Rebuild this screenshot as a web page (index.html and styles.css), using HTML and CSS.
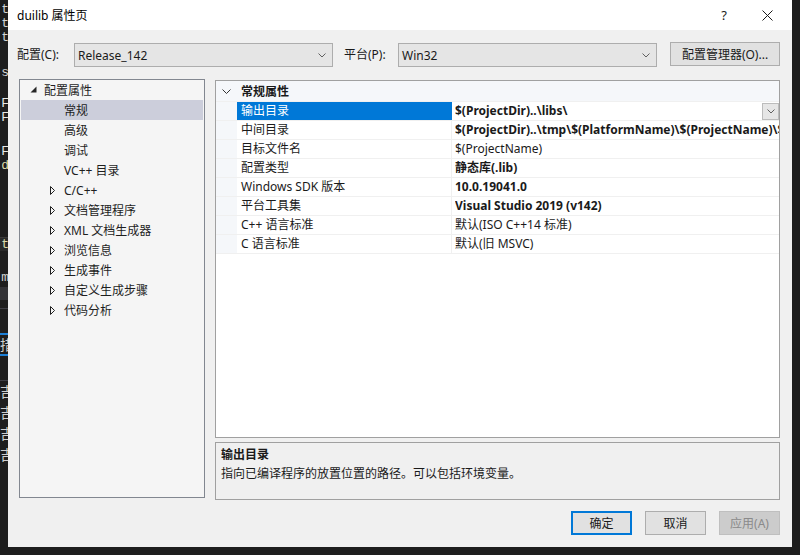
FILE: index.html
```html
<!DOCTYPE html>
<html lang="zh-CN">
<head>
<meta charset="utf-8">
<title>duilib 属性页</title>
<link rel="stylesheet" href="styles.css">
</head>
<body>
<div class="screen">
  <!-- code editor behind the dialog -->
  <div class="strip">
    <div class="ln l-top">t</div>
    <div class="ln">t</div>
    <div class="ln">t</div>
    <div class="sp sp21"></div>
    <div class="ln">s</div>
    <div class="sp sp17"></div>
    <div class="ln ln-f">F</div>
    <div class="ln ln-f">F</div>
    <div class="sp sp20"></div>
    <div class="ln ln-f">F</div>
    <div class="ln ln-y">d</div>
    <div class="sp sp64"></div>
    <div class="ln band ln-y">t</div>
    <div class="sp sp20"></div>
    <div class="ln">m</div>
    <div class="sp sp2"></div>
    <div class="band band-dark"></div>
    <div class="sp sp8"></div>
    <div class="rule rule-gray"></div>
    <div class="sp sp24"></div>
    <div class="rule rule-blue"></div>
    <div class="ln ln-cjk">措</div>
    <div class="rule rule-blue"></div>
    <div class="sp sp24"></div>
    <div class="rule rule-gray"></div>
    <div class="ln ln-cjk tall">吉</div>
    <div class="ln ln-cjk tall">吉</div>
    <div class="ln ln-cjk tall">吉</div>
    <div class="ln ln-cjk tall">吉</div>
  </div>

  <div class="dialog">
    <header class="titlebar">
      <span class="title">duilib 属性页</span>
      <span class="help">?</span>
      <span class="close">
        <svg width="11" height="11" viewBox="0 0 11 11"><path d="M0.5 0.5 L10.5 10.5 M10.5 0.5 L0.5 10.5" stroke="#1a1a1a" stroke-width="1" fill="none"/></svg>
      </span>
    </header>

    <div class="body">
      <div class="toolbar">
        <span class="lbl lbl-cfg">配置(C):</span>
        <div class="select">
          <span class="select-text">Release_142</span>
          <svg class="chev" width="8" height="5" viewBox="0 0 8 5"><path d="M0.5 0.5 L4 4 L7.5 0.5" stroke="#606060" fill="none"/></svg>
        </div>
        <span class="lbl lbl-plat">平台(P):</span>
        <div class="select">
          <span class="select-text">Win32</span>
          <svg class="chev" width="8" height="5" viewBox="0 0 8 5"><path d="M0.5 0.5 L4 4 L7.5 0.5" stroke="#606060" fill="none"/></svg>
        </div>
        <button class="btn btn-mgr">配置管理器(O)...</button>
      </div>

      <div class="main">
        <div class="tree">
          <div class="node lvl1">
            <span class="exp"><svg width="7" height="7" viewBox="0 0 7 7"><path d="M6.5 0.5 L6.5 6.5 L0.5 6.5 Z" fill="#262626"/></svg></span>
            <span>配置属性</span>
          </div>
          <div class="node lvl2 sel"><span class="exp"></span><span>常规</span></div>
          <div class="node lvl2"><span class="exp"></span><span>高级</span></div>
          <div class="node lvl2"><span class="exp"></span><span>调试</span></div>
          <div class="node lvl2"><span class="exp"></span><span>VC++ 目录</span></div>
          <div class="node lvl2"><span class="exp"><svg class="tri" width="6" height="9" viewBox="0 0 6 9"><path d="M0.5 0.5 L4.5 4.5 L0.5 8.5 Z" stroke="#1e1e1e" fill="none"/></svg></span><span>C/C++</span></div>
          <div class="node lvl2"><span class="exp"><svg class="tri" width="6" height="9" viewBox="0 0 6 9"><path d="M0.5 0.5 L4.5 4.5 L0.5 8.5 Z" stroke="#1e1e1e" fill="none"/></svg></span><span>文档管理程序</span></div>
          <div class="node lvl2"><span class="exp"><svg class="tri" width="6" height="9" viewBox="0 0 6 9"><path d="M0.5 0.5 L4.5 4.5 L0.5 8.5 Z" stroke="#1e1e1e" fill="none"/></svg></span><span>XML 文档生成器</span></div>
          <div class="node lvl2"><span class="exp"><svg class="tri" width="6" height="9" viewBox="0 0 6 9"><path d="M0.5 0.5 L4.5 4.5 L0.5 8.5 Z" stroke="#1e1e1e" fill="none"/></svg></span><span>浏览信息</span></div>
          <div class="node lvl2"><span class="exp"><svg class="tri" width="6" height="9" viewBox="0 0 6 9"><path d="M0.5 0.5 L4.5 4.5 L0.5 8.5 Z" stroke="#1e1e1e" fill="none"/></svg></span><span>生成事件</span></div>
          <div class="node lvl2"><span class="exp"><svg class="tri" width="6" height="9" viewBox="0 0 6 9"><path d="M0.5 0.5 L4.5 4.5 L0.5 8.5 Z" stroke="#1e1e1e" fill="none"/></svg></span><span>自定义生成步骤</span></div>
          <div class="node lvl2"><span class="exp"><svg class="tri" width="6" height="9" viewBox="0 0 6 9"><path d="M0.5 0.5 L4.5 4.5 L0.5 8.5 Z" stroke="#1e1e1e" fill="none"/></svg></span><span>代码分析</span></div>
        </div>

        <div class="side">
          <div class="grid">
            <div class="cat">
              <span class="cat-chev"><svg width="9" height="5" viewBox="0 0 9 5"><path d="M0.5 0.5 L4.5 4.5 L8.5 0.5" stroke="#333" fill="none"/></svg></span>
              <span class="cat-name">常规属性</span>
            </div>
            <div class="prop sel">
              <span class="gutter"></span>
              <span class="pname">输出目录</span>
              <span class="pval b"><span class="vtext">$(ProjectDir)..\libs\</span>
                <span class="drop"><svg width="8" height="5" viewBox="0 0 8 5"><path d="M0.5 0.5 L4 4 L7.5 0.5" stroke="#606060" fill="none"/></svg></span>
              </span>
            </div>
            <div class="prop"><span class="gutter"></span><span class="pname">中间目录</span><span class="pval b"><span class="vtext">$(ProjectDir)..\tmp\$(PlatformName)\$(ProjectName)\$(Configuration)\</span></span></div>
            <div class="prop"><span class="gutter"></span><span class="pname">目标文件名</span><span class="pval"><span class="vtext">$(ProjectName)</span></span></div>
            <div class="prop"><span class="gutter"></span><span class="pname">配置类型</span><span class="pval b"><span class="vtext">静态库(.lib)</span></span></div>
            <div class="prop"><span class="gutter"></span><span class="pname">Windows SDK 版本</span><span class="pval b"><span class="vtext">10.0.19041.0</span></span></div>
            <div class="prop"><span class="gutter"></span><span class="pname">平台工具集</span><span class="pval b"><span class="vtext">Visual Studio 2019 (v142)</span></span></div>
            <div class="prop"><span class="gutter"></span><span class="pname">C++ 语言标准</span><span class="pval"><span class="vtext">默认(ISO C++14 标准)</span></span></div>
            <div class="prop"><span class="gutter"></span><span class="pname">C 语言标准</span><span class="pval"><span class="vtext">默认(旧 MSVC)</span></span></div>
          </div>
          <div class="desc">
            <div class="desc-title">输出目录</div>
            <div class="desc-text">指向已编译程序的放置位置的路径。可以包括环境变量。</div>
          </div>
        </div>
      </div>

      <div class="footer">
        <button class="btn btn-foot btn-primary">确定</button>
        <button class="btn btn-foot">取消</button>
        <button class="btn btn-foot btn-disabled">应用(A)</button>
      </div>
    </div>
  </div>
</div>
</body>
</html>
```

FILE: styles.css
```css
* { box-sizing: border-box; }

html, body {
  margin: 0;
  padding: 0;
}

body {
  width: 800px;
  height: 555px;
  overflow: hidden;
  background: #1e1e1e;
  font-family: "Noto Sans", "Noto Sans CJK SC", sans-serif;
  font-size: 12px;
  color: #1a1a1a;
}

.screen {
  display: flex;
  width: 800px;
  height: 555px;
}

/* ---- editor strip on the left ---- */
.strip {
  width: 8px;
  flex: none;
  display: flex;
  flex-direction: column;
  overflow: hidden;
  background: #1e1e1e;
}
.ln {
  height: 14px;
  line-height: 14px;
  font-family: "Liberation Mono", monospace;
  font-size: 13px;
  color: #d4d4d4;
  text-align: right;
  white-space: nowrap;
  margin-right: -1px;
}
.l-top { margin-top: 3px; }
.ln-f { color: #e8e8e8; }
.ln-y { color: #dcdcaa; }
.ln-cjk {
  font-family: "Noto Sans CJK SC", sans-serif;
  font-size: 14px;
  height: 19px;
  line-height: 19px;
  color: #cfcfcf;
  margin-right: -6px;
}
.ln-cjk.tall { height: 21px; line-height: 21px; }
.band { background: #2a2a2a; border-top: 1px solid #3a3a3a; }
.band-dark { height: 13px; background: #333337; border-top: 0; }
.rule { height: 1px; flex: none; }
.rule-gray { background: #3f3f46; }
.rule-blue { height: 2px; background: #1c7fd6; }
.sp { flex: none; }
.sp2 { height: 2px; }
.sp8 { height: 8px; }
.sp17 { height: 17px; }
.sp20 { height: 20px; }
.sp21 { height: 21px; }
.sp24 { height: 24px; }
.sp64 { height: 64px; }

/* ---- dialog window ---- */
.dialog {
  width: 784px;
  height: 547px;
  flex: none;
  background: #f0f0f0;
  display: flex;
  flex-direction: column;
}

.titlebar {
  height: 30px;
  flex: none;
  background: #ffffff;
  display: flex;
  align-items: center;
  padding: 0 19px 0 9px;
}
.title { font-size: 12px; color: #000; }
.help {
  margin-left: auto;
  margin-right: 35px;
  font-size: 13px;
  color: #1a1a1a;
}
.close { display: flex; align-items: center; }

.body {
  flex: 1;
  display: flex;
  flex-direction: column;
  padding: 12px 12px 12px 11px;
}

/* ---- configuration toolbar ---- */
.toolbar {
  height: 25px;
  display: flex;
  align-items: flex-end;
  margin-left: -2px;
}
.lbl {
  flex: none;
  line-height: 24px;
  height: 24px;
}
.lbl-cfg { width: 57px; }
.lbl-plat { width: 54px; margin-left: 11px; }
.select {
  width: 259px;
  height: 24px;
  flex: none;
  background: #e5e5e5;
  border: 1px solid #adadad;
  display: flex;
  align-items: center;
  padding: 0 6px 0 3px;
}
.select-text { flex: 1; }
.chev { flex: none; }

.btn {
  font-family: inherit;
  font-size: 12px;
  color: #1a1a1a;
  background: #e1e1e1;
  border: 1px solid #adadad;
  height: 24px;
  padding: 0;
  margin: 0;
}
.btn-mgr {
  width: 110px;
  margin-left: auto;
  align-self: flex-start;
}

/* ---- tree + grid ---- */
.main {
  margin-top: 12px;
  height: 421px;
  display: flex;
  gap: 10px;
}

.tree {
  width: 186px;
  height: 419px;
  flex: none;
  background: #f5f5f5;
  border: 1px solid #828790;
  padding: 0 1px;
}
.node {
  height: 20px;
  display: flex;
  align-items: center;
  color: #1e1e1e;
}
.node .exp {
  width: 14px;
  flex: none;
  display: flex;
  align-items: center;
}
.lvl1 { padding-left: 9px; }
.lvl1 .exp { padding-bottom: 2px; }
.lvl2 { padding-left: 29px; }
.node.sel { background: #cccedb; }

.side {
  flex: 1;
  margin-top: 1px;
  display: flex;
  flex-direction: column;
  gap: 4px;
}

.grid {
  height: 358px;
  background: #ffffff;
  border: 1px solid #a0a0a0;
  overflow: hidden;
}
.cat {
  height: 21px;
  display: flex;
  align-items: center;
  background: #f5f7fa;
  border-bottom: 1px solid #f0f0f0;
}
.cat-chev {
  width: 25px;
  padding-left: 6px;
  display: flex;
  align-items: center;
}
.cat-name { font-weight: bold; }

.prop {
  height: 19px;
  display: grid;
  grid-template-columns: 21px 215px 1fr;
  border-bottom: 1px solid #f0f0f0;
}
.gutter { background: #f5f7fa; }
.pname {
  padding-left: 4px;
  line-height: 18px;
  border-right: 1px solid #f0f0f0;
  white-space: nowrap;
  overflow: hidden;
}
.pval {
  display: flex;
  align-items: center;
  min-width: 0;
  padding-left: 3px;
  line-height: 18px;
}
.vtext {
  flex: 1;
  white-space: nowrap;
  overflow: hidden;
}
.b { font-weight: bold; }
.prop.sel .pname {
  background: #0078d7;
  color: #ffffff;
  border-right-color: #0078d7;
}
.drop {
  width: 17px;
  height: 17px;
  flex: none;
  background: #e6e6e6;
  border: 1px solid #bcbcbc;
  display: flex;
  align-items: center;
  justify-content: center;
}

.desc {
  height: 58px;
  border: 1px solid #a0a0a0;
  background: #f0f0f0;
  padding: 2px 5px 0;
  line-height: 19px;
}
.desc-title { font-weight: bold; }

/* ---- dialog buttons ---- */
.footer {
  margin-top: 11px;
  display: flex;
  justify-content: flex-end;
  gap: 13px;
}
.btn-foot { width: 61px; }
.btn-primary { border: 2px solid #0078d7; }
.btn-disabled {
  background: #cccccc;
  border-color: #bfbfbf;
  color: #8a8a8a;
}
```
